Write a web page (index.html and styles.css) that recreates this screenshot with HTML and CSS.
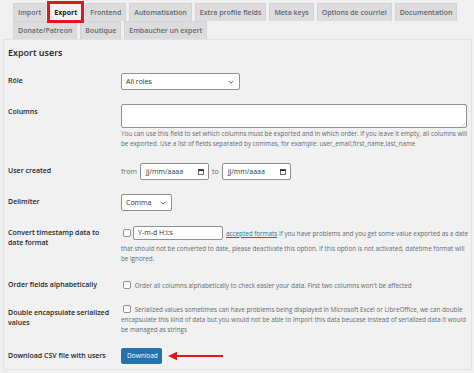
FILE: index.html
```html
<!DOCTYPE html>
<html lang="fr">
<head>
<meta charset="utf-8">
<title>Export users</title>
<link rel="stylesheet" href="styles.css">
</head>
<body>
<div class="page">
  <nav class="tabs">
    <div class="tab-row">
      <span class="tab">Import</span>
      <span class="tab active">Export</span>
      <span class="tab">Frontend</span>
      <span class="tab">Automatisation</span>
      <span class="tab">Extra profile fields</span>
      <span class="tab">Meta keys</span>
      <span class="tab">Options de courriel</span>
      <span class="tab">Documentation</span>
    </div>
    <div class="tab-row">
      <span class="tab">Donate/Patreon</span>
      <span class="tab">Boutique</span>
      <span class="tab">Embaucher un expert</span>
    </div>
  </nav>

  <section class="panel">
    <h2 class="title">Export users</h2>

    <div class="row">
      <div class="label">Rôle</div>
      <div class="field">
        <div class="select select-role"><span>All roles</span>
          <svg class="chev" viewBox="0 0 8 5" width="6" height="4"><path d="M1 1l3 3 3-3" fill="none" stroke="#50575e" stroke-width="1.2"/></svg>
        </div>
      </div>
    </div>

    <div class="row">
      <div class="label">Columns</div>
      <div class="field">
        <div class="textarea"><svg class="grip" viewBox="0 0 4 4" width="3" height="3"><path d="M0 4L4 0M2 4L4 2" stroke="#a7aaad" stroke-width="0.6"/></svg></div>
        <p class="help">You can use this field to set which columns must be exported and in which order. If you leave it empty, all columns will be exported. Use a list of fields separated by commas, for example: user_email,first_name,last_name</p>
      </div>
    </div>

    <div class="row">
      <div class="label">User created</div>
      <div class="field inline">
        <span class="muted">from</span>
        <div class="date"><span>jj/mm/aaaa</span>
          <svg class="cal" viewBox="0 0 8 8" width="6" height="6"><rect x="0.6" y="0.8" width="6.8" height="6.6" fill="none" stroke="#1d2327" stroke-width="0.9"/><rect x="0.6" y="0.8" width="6.8" height="1.8" fill="#1d2327"/></svg>
        </div>
        <span class="muted">to</span>
        <div class="date"><span>jj/mm/aaaa</span>
          <svg class="cal" viewBox="0 0 8 8" width="6" height="6"><rect x="0.6" y="0.8" width="6.8" height="6.6" fill="none" stroke="#1d2327" stroke-width="0.9"/><rect x="0.6" y="0.8" width="6.8" height="1.8" fill="#1d2327"/></svg>
        </div>
      </div>
    </div>

    <div class="row">
      <div class="label">Delimiter</div>
      <div class="field">
        <div class="select select-delim"><span>Comma</span>
          <svg class="chev" viewBox="0 0 8 5" width="6" height="4"><path d="M1 1l3 3 3-3" fill="none" stroke="#50575e" stroke-width="1.2"/></svg>
        </div>
      </div>
    </div>

    <div class="row row-convert">
      <div class="label">Convert timestamp data to date format</div>
      <div class="field">
        <div class="first-line"><span class="checkbox"></span><span class="text-input">Y-m-d H:i:s</span><span class="help-line"><a class="link">accepted formats</a> If you have problems and you get some value exported as a date</span></div>
        <p class="help">that should not be converted to date, please deactivate this option. If this option is not activated, datetime format will be ignored.</p>
      </div>
    </div>

    <div class="row row-order">
      <div class="label">Order fields alphabetically</div>
      <div class="field">
        <p class="help help-check"><span class="checkbox"></span> Order all columns alphabetically to check easier your data. First two columns won't be affected</p>
      </div>
    </div>

    <div class="row row-double">
      <div class="label">Double encapsulate serialized values</div>
      <div class="field">
        <p class="help"><span class="checkbox"></span> Serialized values sometimes can have problems being displayed in Microsoft Excel or LibreOffice, we can double encapsulate this kind of data but you would not be able to import this data beucase instead of serialized data it would be managed as strings</p>
      </div>
    </div>

    <div class="row row-download">
      <div class="label">Download CSV file with users</div>
      <div class="field inline">
        <span class="button">Download</span>
        <svg class="arrow" viewBox="0 0 56 10" width="56" height="10"><path d="M7 5H55" stroke="#e3161b" stroke-width="2"/><path d="M0 5L9 0.8V9.2Z" fill="#e3161b"/></svg>
      </div>
    </div>
  </section>
</div>
</body>
</html>
```

FILE: styles.css
```css
* { box-sizing: border-box; }

body {
  margin: 0;
  background: #f0f0f1;
  font-family: "Open Sans", "Noto Sans", "DejaVu Sans", sans-serif;
  color: #1d2327;
}

.page {
  width: 474px;
  height: 373px;
  overflow: hidden;
}

/* Tabs */
.tabs {
  display: flex;
  flex-direction: column;
  padding: 3px 0 0 13px;
}

.tab-row {
  display: flex;
  gap: 3px;
}

.tab {
  height: 18px;
  line-height: 17px;
  padding: 0 4px;
  background: #dcdcde;
  border: 1px solid #d3d3d6;
  border-bottom: none;
  font-size: 7px;
  font-weight: 600;
  color: #5f666c;
  white-space: nowrap;
}

.tab.active {
  background: #f3f3f4;
  color: #1d2327;
  font-weight: 700;
  outline: 3px solid #e3161b;
  outline-offset: -1px;
  position: relative;
  z-index: 1;
}

/* Panel */
.panel {
  margin: 0 2px 0 3px;
  height: 331px;
  border: 1px solid #e2e2e4;
  background: #f1f1f2;
  padding: 0 0 0 4px;
}

.title {
  margin: 7px 0 7px;
  font-size: 9px;
  line-height: 12px;
  font-weight: 600;
}

.row {
  display: flex;
  align-items: flex-start;
}

.label {
  width: 113px;
  flex: none;
  padding: 10px 8px 10px 0;
  font-size: 7px;
  line-height: 10px;
  font-weight: 600;
  color: #1d2327;
}

.field {
  width: 347px;
  padding: 7px 0;
}

.field.inline {
  display: flex;
  align-items: center;
  gap: 3px;
}

.select, .date, .textarea, .text-input {
  background: #fff;
  border: 1px solid #8c8f94;
  border-radius: 2px;
  font-size: 7px;
  color: #2c3338;
}

.select, .date {
  height: 17px;
  display: flex;
  align-items: center;
  justify-content: space-between;
  padding: 0 5px 0 4px;
}

.select-role { width: 119px; }
.select-delim { width: 51px; }

.date { width: 69px; padding: 0 4px 0 5px; }

.muted { font-size: 7px; color: #646970; }

.textarea {
  height: 24px;
  width: 346px;
  display: flex;
  align-items: flex-end;
  justify-content: flex-end;
  padding: 1px;
}

.help {
  margin: 0;
  font-size: 6.3px;
  line-height: 10px;
  color: #646970;
}

.textarea + .help { margin-top: 1px; }

.checkbox {
  display: inline-block;
  flex: none;
  width: 8px;
  height: 8px;
  border: 1px solid #8c8f94;
  border-radius: 2px;
  background: #fff;
  vertical-align: -1px;
  margin: 0 2px 0 2px;
}

.row-convert .field { padding: 8px 0 6px; }

.first-line {
  display: flex;
  align-items: center;
  height: 14px;
  margin-bottom: 4px;
  font-size: 6.3px;
  color: #646970;
  white-space: nowrap;
}

.text-input {
  display: block;
  flex: none;
  width: 90px;
  height: 14px;
  line-height: 12px;
  padding: 0 4px;
  margin-right: 3px;
}

.link {
  color: #2271b1;
  text-decoration: underline;
}

.help-check { line-height: 16px; }

.row-order .field { padding: 8px 0 4px; }

.row-double .label { padding-top: 8px; line-height: 9.5px; }
.row-double .field { padding: 5px 0 6px; }

.button {
  height: 16px;
  line-height: 16px;
  padding: 0 6px;
  background: #2271b1;
  color: #fff;
  border-radius: 2px;
  font-size: 6.5px;
  width: 41px;
  text-align: center;
}

.arrow { margin-left: 3px; }
```
